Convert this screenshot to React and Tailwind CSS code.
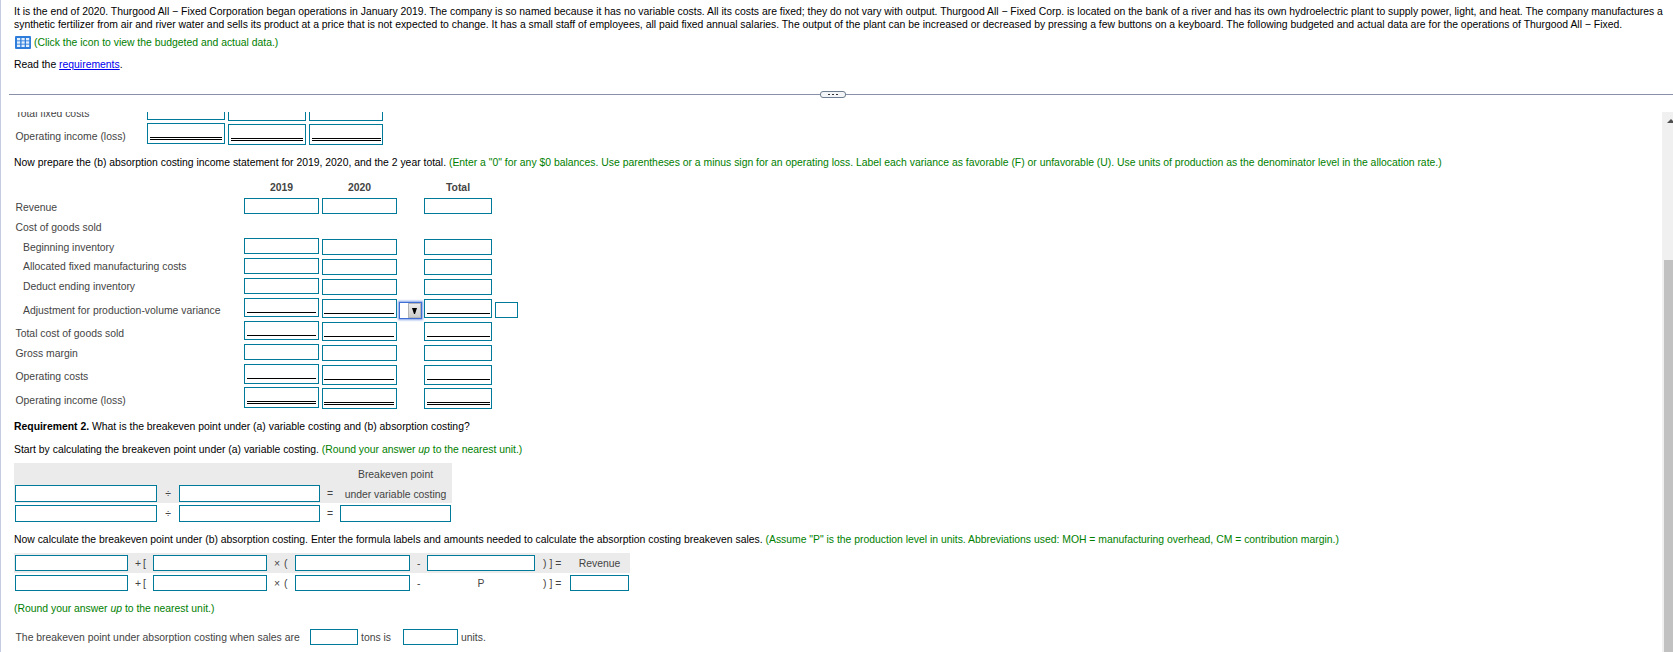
import React from "react";

function Field({ className = "", rule }) {
  return (
    <span className={`block shrink-0 border border-[#007a99] bg-white ${className}`}>
      {rule && <span className={`block border-black ${rule}`} />}
    </span>
  );
}

const PLAIN = { box: "h-4", one: "", two: "" };
const SINGLE_19 = {
  box: "h-[19px]",
  one: "ml-0.5 mr-[2px] h-[14px] border-b",
  two: "ml-[1px] mr-[2px] h-[14px] border-b",
  total: "ml-0.5 mr-[1px] h-[14px] border-b",
};
const SINGLE_20 = {
  box: "h-5",
  one: "ml-0.5 mr-[2px] h-[14px] border-b",
  two: "ml-[1px] mr-[2px] h-[14px] border-b",
  total: "ml-0.5 mr-[1px] h-[14px] border-b",
};
const DOUBLE = {
  box: "h-[21px]",
  one: "ml-0.5 mr-[2px] h-4 border-b-3 border-double",
  two: "ml-[1px] mr-[2px] h-4 border-b-3 border-double",
  total: "ml-0.5 mr-[1px] h-4 border-b-3 border-double",
};

const ROWS = [
  { label: "Revenue", h: "h-5", kind: PLAIN, even: true },
  { label: "Cost of goods sold", h: "h-5" },
  { label: "Beginning inventory", h: "h-5", indent: true, kind: PLAIN },
  { label: "Allocated fixed manufacturing costs", h: "h-5", indent: true, kind: PLAIN, up: true },
  { label: "Deduct ending inventory", h: "h-5", indent: true, kind: PLAIN, up: true },
  { label: "Adjustment for production-volume variance", h: "h-[23px]", indent: true, kind: SINGLE_19, low: true, choice: true },
  { label: "Total cost of goods sold", h: "h-[23px]", kind: SINGLE_19, low: true },
  { label: "Gross margin", h: "h-5", kind: PLAIN },
  { label: "Operating costs", h: "h-[23px]", kind: SINGLE_20, low: true },
  { label: "Operating income (loss)", h: "h-[23px]", kind: DOUBLE, low: true, lower: true },
];

function StatementRow({ row }) {
  const { kind } = row;
  const drop = row.even ? "" : "mt-px";
  const pad = row.lower ? "pt-1" : row.low ? "pt-[2px]" : row.up ? "pb-[3px]" : "pb-px";
  return (
    <div className={`grid grid-cols-[230px_78px_77px_25px_71px_23px] ${row.h}`}>
      <div className={`flex items-center ${row.indent ? "pl-[9px]" : "pl-[1.5px]"} ${pad}`}>{row.label}</div>
      {kind && (
        <>
          <Field className={`w-[75px] ${kind.box}`} rule={kind.one} />
          <Field className={`w-[75px] ${kind.box} ${drop}`} rule={kind.two} />
          <div>{row.choice && <FavorabilitySelect />}</div>
          <Field className={`w-[68px] ${kind.box} ${drop}`} rule={kind.total} />
          <div>{row.choice && <Field className="mt-1 h-4 w-[23px]" />}</div>
        </>
      )}
    </div>
  );
}

function FavorabilitySelect() {
  return (
    <button className="mt-1 flex h-[17px] w-[23px] justify-end border border-[#3f6fd6] bg-white shadow-[0_0_2px_1px_#7f9fe6]">
      <span className="flex h-full w-[13px] items-center justify-center border border-[#b5b5b5] bg-linear-to-b from-[#ececec] to-[#cccccc]">
        <svg width="5" height="6" viewBox="0 0 5 6">
          <path d="M0 0h5L3 6H2z" fill="#000" />
        </svg>
      </span>
    </button>
  );
}

function TableIcon() {
  return (
    <svg width="16" height="13" viewBox="0 0 16 13" className="shrink-0">
      <rect width="16" height="13" rx="1" fill="#2f7ddb" />
      {[2, 6.5, 11].map((x) =>
        [2, 5.3, 8.6].map((y) => (
          <rect key={`${x}-${y}`} x={x} y={y} width="3.2" height="2.4" fill="#e4effc" />
        ))
      )}
    </svg>
  );
}

function FormulaRow({ shaded, last }) {
  return (
    <div
      className={`grid h-5 w-[616px] grid-cols-[114px_25px_114px_28px_116px_16px_108px_35px_60px] items-center ${shaded ? "bg-[#ebebeb]" : ""}`}
    >
      <Field className="ml-px h-4 w-[113px]" />
      <span className="flex gap-[2px] pl-[7px]"><span>+</span><span>[</span></span>
      <Field className="h-4 w-[114px]" />
      <span className="flex gap-1 pl-[7px]"><span>×</span><span>(</span></span>
      <Field className="h-4 w-[115px]" />
      <span className="pl-[6px]">-</span>
      {shaded ? <Field className="h-4 w-[108px]" /> : <span className="text-center">P</span>}
      <span className="flex gap-[3px] pl-[8px]"><span>)</span><span>]</span><span>=</span></span>
      {last}
    </div>
  );
}

function RatioBoxes() {
  return (
    <>
      <Field className="h-[17px] w-[142px]" />
      <span className="w-[22px] text-center leading-[17px]">÷</span>
      <Field className="h-[17px] w-[141px]" />
      <span className="w-5 text-center leading-[17px]">=</span>
    </>
  );
}

export default function App() {
  return (
    <div className="flex h-[652px] w-[1673px] flex-col overflow-hidden border-l border-[#c5cbe0] bg-white font-['Liberation_Sans',Arial,sans-serif] text-[10.4px] leading-[13px] text-black">
      <header className="flex h-[91px] flex-col whitespace-nowrap pl-[13px] pt-[5px]">
        <p>
          It is the end of 2020. Thurgood All − Fixed Corporation began operations in January 2019. The company is so named because it has no variable costs. All its costs are fixed; they do not vary with output. Thurgood All − Fixed Corp. is located on the bank of a river and has its own hydroelectric plant to supply power, light, and heat. The company manufactures a
          <br />
          synthetic fertilizer from air and river water and sells its product at a price that is not expected to change. It has a small staff of employees, all paid fixed annual salaries. The output of the plant can be increased or decreased by pressing a few buttons on a keyboard. The following budgeted and actual data are for the operations of Thurgood All − Fixed.
        </p>
        <div className="mt-[5px] flex items-center gap-[3px] pl-px text-[#008000]">
          <TableIcon />
          <span>(Click the icon to view the budgeted and actual data.)</span>
        </div>
        <p className="mt-[9px]">
          Read the <a className="text-[#0000ee] underline">requirements</a>.
        </p>
      </header>

      <div className="flex h-[7px] items-center pl-2">
        <span className="h-px w-[811px] bg-[#8a90a8]" />
        <span className="flex h-[7px] w-[26px] items-center justify-center gap-[2px] rounded-[3px] border border-[#6d7f90] bg-[#f3f5f7]">
          <span className="h-px w-[2px] bg-[#333]" />
          <span className="h-px w-[2px] bg-[#333]" />
          <span className="h-px w-[2px] bg-[#333]" />
        </span>
        <span className="h-px grow bg-[#8a90a8]" />
      </div>

      <div className="mt-[14px] flex min-h-0 grow">
        <main className="min-w-0 grow overflow-hidden whitespace-nowrap pl-[13px]">
          <div className="-mt-[11px] text-[#444]">
            <div className="grid h-[22px] grid-cols-[133px_81px_81px_74px]">
              <span className="flex items-center pl-[1.5px] pt-[2px]">Total fixed costs</span>
              <Field className="h-[19px] w-[78px]" />
              <Field className="mt-px h-[19px] w-[78px]" />
              <Field className="mt-px h-[19px] w-[74px]" />
            </div>
            <div className="grid h-[22px] grid-cols-[133px_81px_81px_74px]">
              <span className="flex items-center pl-[1.5px] pt-[5px]">Operating income (loss)</span>
              <Field className="h-[21px] w-[78px]" rule="mx-0.5 h-4 border-b-3 border-double" />
              <Field className="mt-px h-[21px] w-[78px]" rule="mx-0.5 h-4 border-b-3 border-double" />
              <Field className="mt-px h-[21px] w-[74px]" rule="ml-0.5 mr-px h-4 border-b-3 border-double" />
            </div>
          </div>

          <p className="mt-[11px]">
            Now prepare the (b) absorption costing income statement for 2019, 2020, and the 2 year total.{" "}
            <span className="text-[#008000]">
              (Enter a "0" for any $0 balances. Use parentheses or a minus sign for an operating loss. Label each variance as favorable (F) or unfavorable (U). Use units of production as the denominator level in the allocation rate.)
            </span>
          </p>

          <div className="mt-3 text-[#444]">
            <div className="grid h-[17px] grid-cols-[230px_75px_3px_75px_27px_68px] text-center font-bold">
              <span />
              <span>2019</span>
              <span />
              <span>2020</span>
              <span />
              <span>Total</span>
            </div>
            {ROWS.map((row) => (
              <StatementRow key={row.label} row={row} />
            ))}
          </div>

          <p className="mt-2.5">
            <b>Requirement 2.</b> What is the breakeven point under (a) variable costing and (b) absorption costing?
          </p>
          <p className="mt-2.5">
            Start by calculating the breakeven point under (a) variable costing.{" "}
            <span className="text-[#008000]">
              (Round your answer <i>up</i> to the nearest unit.)
            </span>
          </p>

          <div className="mt-[7px] text-[#444]">
            <div className="flex h-10 w-[438px] items-end bg-[#ebebeb] pb-px pl-px">
              <RatioBoxes />
              <span className="-mb-[3px] w-[111px] text-center leading-5">
                Breakeven point
                <br />
                under variable costing
              </span>
            </div>
            <div className="flex items-center pl-px pt-0.5">
              <RatioBoxes />
              <Field className="h-[17px] w-[111px]" />
            </div>
          </div>

          <p className="mt-[11px]">
            Now calculate the breakeven point under (b) absorption costing. Enter the formula labels and amounts needed to calculate the absorption costing breakeven sales.{" "}
            <span className="text-[#008000]">
              (Assume "P" is the production level in units. Abbreviations used: MOH = manufacturing overhead, CM = contribution margin.)
            </span>
          </p>

          <div className="mt-[7px] text-[#444]">
            <FormulaRow shaded last={<span className="pr-px text-center">Revenue</span>} />
            <FormulaRow last={<Field className="h-4 w-[59px]" />} />
          </div>

          <p className="mt-[9px] text-[#008000]">
            (Round your answer <i>up</i> to the nearest unit.)
          </p>
          <div className="mt-[14px] flex items-center pl-0.5 text-[#444]">
            <span className="-ml-[0.5px] w-[294.5px] pt-px">The breakeven point under absorption costing when sales are</span>
            <Field className="h-4 w-12" />
            <span className="w-[45px] pl-[3px] pt-px">tons is</span>
            <Field className="h-4 w-[55px]" />
            <span className="pl-[3px] pt-px">units.</span>
          </div>
        </main>

        <aside className="flex w-[11px] shrink-0 flex-col overflow-hidden bg-[#f0f0f0]">
          <svg width="11" height="12" viewBox="0 0 11 12" className="shrink-0">
            <path d="M5 11L9 7l4 4z" fill="#505050" />
          </svg>
          <span className="ml-0.5 mt-[136px] w-[9px] grow bg-[#c1c1c1]" />
        </aside>
      </div>
    </div>
  );
}
